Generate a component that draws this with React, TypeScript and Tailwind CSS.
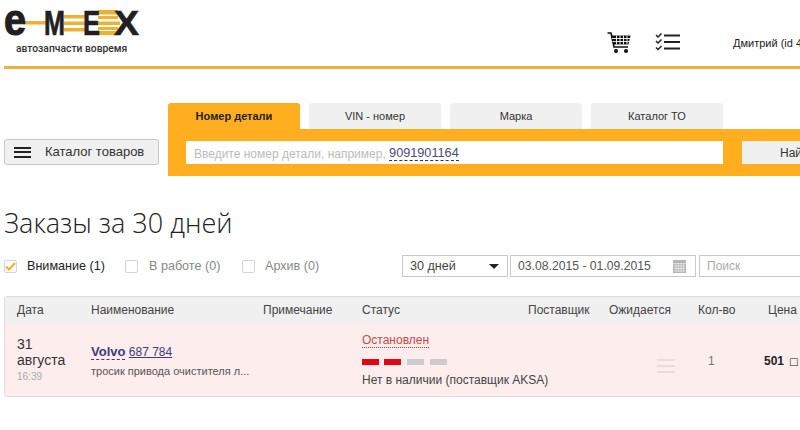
import React from 'react';

const tabs = ['VIN - номер', 'Марка', 'Каталог ТО'];

const Logo = () => (
  <svg width="140" height="60" viewBox="0 -10 140 60" className="block -mt-[10px] -mb-[10px]">
    {/* yellow stripes running through the letters */}
    <g fill="#f0b030">
      <rect x="20" y="21" width="22" height="3.5" />
      <rect x="60" y="15" width="22" height="3.5" />
      <rect x="60" y="21.5" width="22" height="3.5" />
      <rect x="60" y="28" width="22" height="3.5" />
      <rect x="94" y="10" width="20" height="4.5" />
      <rect x="94" y="16" width="20" height="3" />
      <rect x="94" y="21.5" width="22" height="3.5" />
      <rect x="94" y="27" width="20" height="3" />
      <rect x="94" y="31" width="20" height="4" />
    </g>
    <g fill="#231f20" stroke="#231f20" strokeWidth="0.7" fontFamily="'Liberation Sans', sans-serif" fontWeight="700">
      <text x="0" y="34.5" fontSize="45" textLength="22" lengthAdjust="spacingAndGlyphs" strokeWidth="1.2">e</text>
      <text x="40" y="34.6" fontSize="34.5" textLength="21" lengthAdjust="spacingAndGlyphs">M</text>
      <text x="79" y="34.6" fontSize="34.5" textLength="17" lengthAdjust="spacingAndGlyphs">E</text>
      <text x="110" y="34.6" fontSize="34.5" textLength="25" lengthAdjust="spacingAndGlyphs">X</text>
    </g>
  </svg>
);

const CartIcon = () => (
  <svg width="24" height="22" viewBox="0 0 24 22" className="block">
    <path d="M0.5 1H4L7 15H21" fill="none" stroke="#111" strokeWidth="1.6" />
    <path d="M4.5 3.5H23.5L21.5 12.5H6.5Z" fill="#111" />
    <g stroke="#fff" strokeWidth="0.9">
      <path d="M5 6.5H23M5.5 9.5H22.5" />
      <path d="M9.5 3.5V12.5M13 3.5V12.5M16.5 3.5V12.5M20 3.5V12.5" />
    </g>
    <circle cx="9" cy="19" r="2" fill="#111" />
    <circle cx="19" cy="19" r="2" fill="#111" />
  </svg>
);

const ChecklistIcon = () => (
  <svg width="25" height="18" viewBox="0 0 25 18" className="block">
    <path d="M9 2.5H25M9 9H25M9 15.5H25" stroke="#222" strokeWidth="1.8" />
    <path d="M1 2L3 4L6.5 0.5M1 8L3 10L6.5 6.5M1 14.5L3 16.5L6.5 13" fill="none" stroke="#222" strokeWidth="1.5" />
  </svg>
);

const Checkbox = ({ checked }: { checked?: boolean }) => (
  <span className="w-[13px] h-[13px] border border-[#d4d4d4] rounded-[2px] bg-white shrink-0 flex items-center justify-center">
    {checked && (
      <svg width="11" height="9" viewBox="0 0 11 9">
        <path d="M1 4.5L4 7.5L10 1" fill="none" stroke="#f5ae23" strokeWidth="2" />
      </svg>
    )}
  </span>
);

const CalendarIcon = () => (
  <svg width="13" height="13" viewBox="0 0 13 13" className="block">
    <rect width="13" height="13" y="0" fill="#b5b5b5" />
    <path d="M0 3.5H13M1 6H12M1 8.5H12M1 11H12M3 4V12M5.5 4V12M8 4V12M10.5 4V12" stroke="#e6e6e6" strokeWidth="0.8" />
  </svg>
);

export default function App() {
  return (
    <div className="w-[800px] h-[430px] overflow-hidden bg-white text-[12px] text-[#222] font-['Liberation_Sans',Arial,sans-serif]">
      {/* Header */}
      <header className="h-[70px] pl-[4px]">
        <div className="h-[66px] flex items-start">
          <div className="w-[603px] shrink-0">
            <Logo />
            <div className="pl-[12px] mt-[3px] text-[10.3px] leading-[12px] font-['Roboto',sans-serif] font-medium text-[#333] whitespace-nowrap">автозапчасти вовремя</div>
          </div>
          <div className="pt-[32px] w-[48px] shrink-0"><CartIcon /></div>
          <div className="pt-[33px] w-[78px] shrink-0"><ChecklistIcon /></div>
          <div className="pt-[37px] w-[70px] text-[11px] leading-[13px] whitespace-nowrap text-[#222]">Дмитрий (id 4</div>
        </div>
        <div className="h-[3px] bg-[#efb041]" />
      </header>

      {/* Search */}
      <section className="pt-[33px] pl-[4px] flex items-end">
        <button className="w-[155px] h-[26px] mb-[11px] shrink-0 flex items-center pl-[9px] border border-[#c8c8c8] rounded-[3px] bg-[#f0f0f0] text-[13px] text-[#333]">
          <span className="w-[17px] h-[11px] border-y-2 border-[#222] flex items-center mr-[14px]"><span className="w-full h-[2px] bg-[#222]" /></span>
          Каталог товаров
        </button>
        <div className="ml-[9px] w-[632px] shrink-0">
          <div className="flex gap-[9px] h-[26px]">
            <div className="w-[132px] rounded-t-[3px] bg-[#ffae1f] flex items-center justify-center text-[11px] font-bold text-[#222]">Номер детали</div>
            {tabs.map((t) => (
              <div key={t} className="w-[132px] rounded-t-[3px] bg-[#f0f0f0] flex items-center justify-center text-[11px] text-[#333]">{t}</div>
            ))}
          </div>
          <div className="h-[47px] bg-[#ffae1f] flex items-center pl-[18px]">
            <div className="w-[537px] h-[23px] shrink-0 bg-white flex items-center pl-[8px] pt-[2px] text-[12px] text-[#bbb] whitespace-nowrap">
              Введите номер детали, например,&nbsp;
              <span className="text-[12.7px] leading-[14px] text-[#4a4a78] border-b border-dashed border-[#333]">9091901164</span>
            </div>
            <div className="ml-[19px] w-[58px] h-[23px] shrink-0 bg-[#f0f0f0] pl-[38px] flex items-center text-[12px] text-[#333] whitespace-nowrap overflow-hidden">Найти</div>
          </div>
        </div>
      </section>

      {/* Title */}
      <h1 className="mt-[28px] pl-[4px] h-[38px] text-[27px] leading-[38px] font-light font-['Open_Sans',sans-serif] text-[#222]">Заказы за 30 дней</h1>

      {/* Filters */}
      <div className="mt-[11px] pl-[4px] h-[26px] flex items-center text-[12.6px]">
        <Checkbox checked />
        <span className="ml-[10px] w-[98px] shrink-0 text-[#222]">Внимание (1)</span>
        <Checkbox />
        <span className="ml-[11px] w-[93px] shrink-0 text-[#888]">В работе (0)</span>
        <Checkbox />
        <span className="ml-[10px] w-[137px] shrink-0 text-[#888]">Архив (0)</span>
        <div className="w-[106px] h-[22px] shrink-0 border border-[#c8c8c8] flex items-center justify-between pl-[7px] pr-[8px] text-[#444]">
          30 дней
          <span className="w-0 h-0 border-x-[5px] border-x-transparent border-t-[5px] border-t-[#222]" />
        </div>
        <div className="ml-[2px] w-[186px] h-[22px] shrink-0 border border-[#c8c8c8] flex items-center justify-between pl-[7px] pr-[9px] text-[12.2px] text-[#555]">
          03.08.2015 - 01.09.2015
          <CalendarIcon />
        </div>
        <div className="ml-[3px] w-[120px] h-[22px] shrink-0 border border-[#c8c8c8] flex items-center pl-[7px] text-[12px] text-[#aaa]">Поиск</div>
      </div>

      {/* Orders table */}
      <div className="mt-[17px] ml-[4px] w-[830px] h-[101px] border border-[#dcdcdc] rounded-[3px] overflow-hidden">
        <div className="h-[26px] bg-[#f0f0f0] pl-[12px] grid grid-cols-[74px_172px_99px_166px_81px_89px_66px_60px] items-center text-[#444]">
          <span>Дата</span>
          <span>Наименование</span>
          <span>Примечание</span>
          <span>Статус</span>
          <span>Поставщик</span>
          <span>Ожидается</span>
          <span>Кол-во</span>
          <span className="pl-[4px]">Цена</span>
        </div>
        <div className="h-[73px] bg-[#fdeded] pl-[12px] grid grid-cols-[74px_172px_99px_166px_81px_89px_66px_60px] items-start">
          <div className="pt-[13px] text-[14px] leading-[16px] text-[#333]">
            31<br />августа
            <div className="mt-[2px] text-[10px] leading-[14px] text-[#aaa]">16:39</div>
          </div>
          <div className="pt-[21px]">
            <div className="leading-[16px] text-[#3c3c7c]">
              <span className="font-bold text-[13px] border-b border-dashed border-[#3c3c7c]">Volvo</span>{' '}
              <span className="underline">687 784</span>
            </div>
            <div className="mt-[4px] text-[11px] leading-[14px] text-[#555] whitespace-nowrap">тросик привода очистителя л...</div>
          </div>
          <div />
          <div className="pt-[8px]">
            <span className="text-[#c44a4a] border-b border-dotted border-[#a33]">Остановлен</span>
            <div className="mt-[10px] flex gap-[5px]">
              <span className="w-[17px] h-[6px] bg-[#e30613]" />
              <span className="w-[17px] h-[6px] bg-[#e30613]" />
              <span className="w-[17px] h-[6px] ml-[1px] bg-[#cccccc]" />
              <span className="w-[17px] h-[6px] ml-[1px] bg-[#cccccc]" />
            </div>
            <div className="mt-[6px] whitespace-nowrap text-[#444]">Нет в наличии (поставщик AKSA)</div>
          </div>
          <div />
          <div className="pt-[36px] pl-[48px]">
            <div className="w-[18px] h-[14px] border-y-2 border-[#e8dcdc] flex items-center"><span className="w-full h-[2px] bg-[#e8dcdc]" /></div>
          </div>
          <div className="pt-[29px] pl-[10px] text-[#777]">1</div>
          <div className="pt-[29px] font-bold text-[#222] whitespace-nowrap flex items-center">501<span className="ml-[5px] mt-[1px] font-normal text-[10px] font-['DejaVu_Sans',sans-serif]">□</span></div>
        </div>
      </div>
    </div>
  );
}
